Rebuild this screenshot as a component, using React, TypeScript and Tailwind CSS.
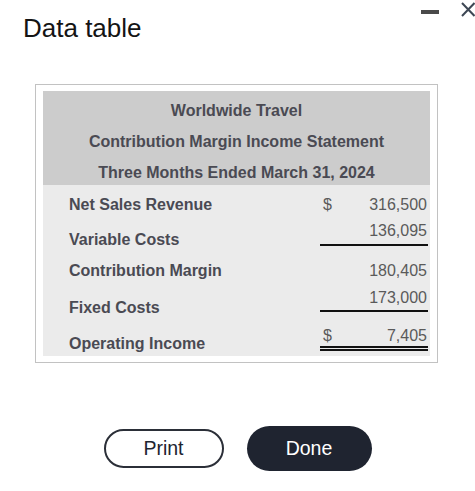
import React from "react";

const font = { fontFamily: '"Liberation Sans", Arial, sans-serif' };

function Num({ dollar, value }: { dollar?: boolean; value: string }) {
  return (
    <div className="flex h-[18px] items-start justify-between leading-[18px] text-[16px] text-[#5a5a5a]">
      <span className="pl-[3px]">{dollar ? "$" : ""}</span>
      <span className="pr-[1px]">{value}</span>
    </div>
  );
}

function Label({ children, pt }: { children: React.ReactNode; pt: string }) {
  return (
    <div className={`flex-1 pl-[26px] font-bold text-[16px] leading-[18px] text-[#4a4a53] ${pt}`}>{children}</div>
  );
}

export default function App() {
  return (
    <div className="w-[475px] h-[491px] bg-white" style={font}>
      <div className="flex justify-between">
        <div className="pl-[23px] pt-[13px] text-[26px] leading-[30px] text-[#141414]">Data table</div>
        <div className="flex items-start gap-[22px] pt-[2px]">
          <div className="mt-[8px] w-[18px] h-[4px] bg-[#4a4a4a]" />
          <svg width="14" height="15" viewBox="0 0 14 15" className="mt-0">
            <path d="M1 1 L13.5 14 M13.5 1 L1 14" stroke="#3d4754" strokeWidth="2" fill="none" />
          </svg>
        </div>
      </div>

      <div className="ml-[35px] mt-[41px] w-[403px] h-[279px] border border-[#c2c2c2] px-[7px] pt-[6px] pb-[6px]">
        <div className="h-[94px] bg-[#cccccc] pt-[4px] text-center font-bold text-[16px] leading-[31px] text-[#4a4a53]">
          <div className="h-[31px]">Worldwide Travel</div>
          <div className="h-[31px]">Contribution Margin Income Statement</div>
          <div className="h-[28px]">Three Months Ended March 31, 2024</div>
        </div>
        <div className="h-[171px] bg-[#ebebeb]">
          {/* Row A */}
          <div className="flex h-[34px]">
            <Label pt="pt-[11px]">Net Sales Revenue</Label>
            <div className="w-[108px] mr-[2px] pt-[11px]">
              <Num dollar value="316,500" />
            </div>
          </div>
          {/* Row B */}
          <div className="flex h-[33px]">
            <Label pt="pt-[12px]">Variable Costs</Label>
            <div className="w-[108px] mr-[2px] pt-[3px]">
              <Num value="136,095" />
              <div className="mt-[4px] h-[2px] bg-[#111111]" />
            </div>
          </div>
          {/* Row C */}
          <div className="flex h-[31px]">
            <Label pt="pt-[10px]">Contribution Margin</Label>
            <div className="w-[108px] mr-[2px] pt-[10px]">
              <Num value="180,405" />
            </div>
          </div>
          {/* Row D */}
          <div className="flex h-[35px]">
            <Label pt="pt-[16px]">Fixed Costs</Label>
            <div className="w-[108px] mr-[2px] pt-[6px]">
              <Num value="173,000" />
              <div className="mt-[3px] h-[2px] bg-[#111111]" />
            </div>
          </div>
          {/* Row E */}
          <div className="flex h-[38px]">
            <Label pt="pt-[17px]">Operating Income</Label>
            <div className="w-[108px] mr-[2px] pt-[9px]">
              <Num dollar value="7,405" />
              <div className="mt-[1px] h-[2px] bg-[#111111]" />
              <div className="mt-[1px] h-[2px] bg-[#111111]" />
            </div>
          </div>
        </div>
      </div>

      <div className="mt-[63px] flex items-center justify-center gap-[23px]">
        <button className="w-[120px] h-[39px] rounded-full border-2 border-[#2b2f38] bg-white text-[19.5px] text-[#1e2430]">
          Print
        </button>
        <button className="w-[125px] h-[45px] rounded-full bg-[#1f2430] text-[19.5px] text-white">
          Done
        </button>
      </div>
    </div>
  );
}
